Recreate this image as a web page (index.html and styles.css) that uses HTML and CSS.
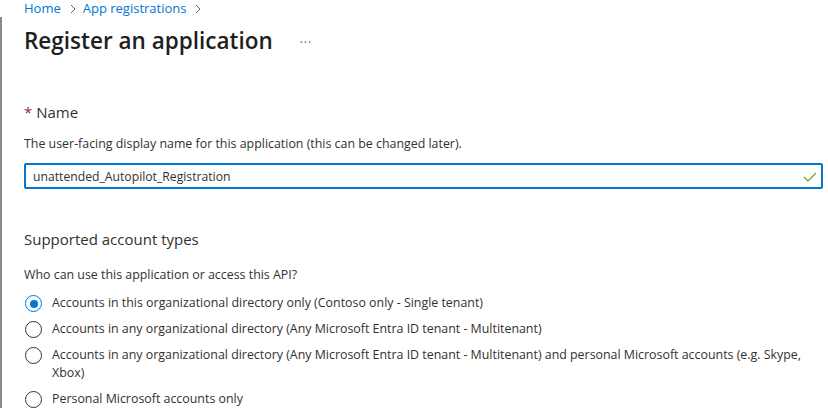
FILE: index.html
```html
<!DOCTYPE html>
<html>
<head>
<meta charset="utf-8">
<link rel="stylesheet" href="styles.css">
</head>
<body>
<div class="page">
  <nav class="crumbs">
    <a class="crumb">Home</a>
    <span class="sep"><svg width="8" height="10" viewBox="0 0 8 10"><path d="M2 1 L6 5 L2 9" fill="none" stroke="#605e5c" stroke-width="1"/></svg></span>
    <a class="crumb">App registrations</a>
    <span class="sep"><svg width="8" height="10" viewBox="0 0 8 10"><path d="M2 1 L6 5 L2 9" fill="none" stroke="#605e5c" stroke-width="1"/></svg></span>
  </nav>
  <div class="main">
    <div class="titlebar">
      <h1 class="title">Register an application</h1>
      <span class="more">···</span>
    </div>
    <section class="name-section">
      <div class="label"><span class="req">*</span> Name</div>
      <p class="desc">The user-facing display name for this application (this can be changed later).</p>
      <div class="input">
        <span class="value">unattended_Autopilot_Registration</span>
        <svg class="check" width="14" height="10" viewBox="0 0 14 10"><path d="M1 5 L5 9 L13 1" fill="none" stroke="#6bb035" stroke-width="1.3"/></svg>
      </div>
    </section>
    <section class="types">
      <div class="label">Supported account types</div>
      <p class="desc">Who can use this application or access this API?</p>
      <div class="radios">
        <div class="radio checked"><span class="circle"></span><span class="rtext">Accounts in this organizational directory only (Contoso only - Single tenant)</span></div>
        <div class="radio"><span class="circle"></span><span class="rtext">Accounts in any organizational directory (Any Microsoft Entra ID tenant - Multitenant)</span></div>
        <div class="radio"><span class="circle"></span><span class="rtext">Accounts in any organizational directory (Any Microsoft Entra ID tenant - Multitenant) and personal Microsoft accounts (e.g. Skype, Xbox)</span></div>
        <div class="radio"><span class="circle"></span><span class="rtext">Personal Microsoft accounts only</span></div>
      </div>
    </section>
  </div>
</div>
</body>
</html>
```
FILE: styles.css
```css
html, body {
  margin: 0;
  padding: 0;
  background: #fff;
}
body {
  font-family: "Open Sans", "Noto Sans", sans-serif;
  color: #323130;
  font-size: 13px;
  width: 828px;
  height: 410px;
  overflow: hidden;
}
.page {
  display: flex;
  flex-direction: column;
}
.crumbs {
  display: flex;
  align-items: center;
  height: 17px;
  padding-left: 24px;
  font-size: 13px;
  line-height: 17px;
}
.crumb {
  color: #0078d4;
}
.sep {
  display: inline-flex;
  align-items: center;
  padding: 0 6px 0 8px;
  margin-top: 1px;
}
.main {
  border-left: 2px solid #8a8886;
  padding-left: 22px;
  padding-right: 5px;
  display: flex;
  flex-direction: column;
}
.titlebar {
  display: flex;
  align-items: center;
  height: 47px;
}
.title {
  margin: 0;
  font-size: 22.5px;
  font-weight: 600;
  color: #201f1e;
  line-height: 30px;
}
.more {
  margin-left: 27px;
  margin-top: 3px;
  font-size: 12px;
  color: #605e5c;
  letter-spacing: 1px;
}
.name-section {
  margin-top: 38px;
  display: flex;
  flex-direction: column;
}
.label {
  font-size: 15px;
  line-height: 20px;
  color: #323130;
}
.req {
  color: #a4262c;
}
.desc {
  margin: 0;
  margin-top: 14px;
  font-size: 12.4px;
  line-height: 16px;
}
.input {
  margin-top: 11px;
  height: 22px;
  border: 2px solid #0078d4;
  border-radius: 2px;
  display: flex;
  align-items: center;
  justify-content: space-between;
  padding: 0 4px 0 7px;
  font-size: 12.2px;
}
.check {
  margin-top: 1px;
}
.types {
  margin-top: 40px;
  display: flex;
  flex-direction: column;
}
.types .desc {
  margin-top: 18px;
}
.radios {
  margin-top: 11px;
  display: flex;
  flex-direction: column;
  gap: 8px;
}
.radio {
  display: flex;
  align-items: flex-start;
  font-size: 12.4px;
  line-height: 18px;
}
.circle {
  flex: none;
  width: 17px;
  height: 17px;
  border: 1px solid #323130;
  border-radius: 50%;
  box-sizing: border-box;
  margin: 1px 10px 0 1px;
  position: relative;
}
.radio.checked .circle {
  border-color: #0078d4;
}
.radio.checked .circle::after {
  content: "";
  position: absolute;
  left: 3.5px;
  top: 3.5px;
  width: 8px;
  height: 8px;
  border-radius: 50%;
  background: #0078d4;
}
```
